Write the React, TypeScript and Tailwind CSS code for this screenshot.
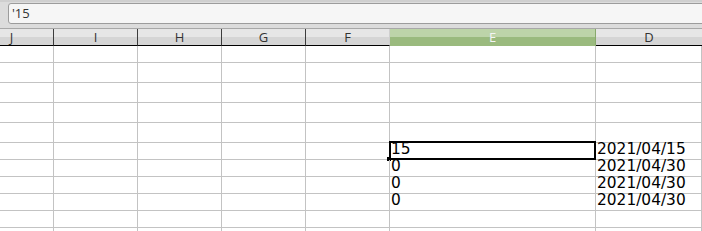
import React from "react";

const cols = [
  { key: "J", w: 84 },
  { key: "I", w: 84 },
  { key: "H", w: 84 },
  { key: "G", w: 84 },
  { key: "F", w: 84 },
  { key: "E", w: 206 },
  { key: "D", w: 106 },
];

const rows: { h: number; e?: string; d?: string; sel?: boolean }[] = [
  { h: 17 },
  { h: 20 },
  { h: 20 },
  { h: 20 },
  { h: 20 },
  { h: 17, e: "15", d: "2021/04/15", sel: true },
  { h: 17, e: "0", d: "2021/04/30" },
  { h: 17, e: "0", d: "2021/04/30" },
  { h: 17, e: "0", d: "2021/04/30" },
  { h: 17 },
  { h: 17 },
];

export default function App() {
  return (
    <div className="w-[702px] h-[231px] overflow-hidden bg-white">
      {/* formula bar */}
      <div className="h-[29px] bg-[#dcdcdc] border-t-[2px] border-[#cfcfcf] pt-[1px] pl-[8px] border-b border-b-[#a8a8a8]">
        <div className="h-[21px] -mr-[6px] rounded-[3px] border border-[#9c9c9c] bg-[#f6f6f6] flex items-center pl-[3px] text-[13px] text-[#333333] [font-family:'Open_Sans',sans-serif]">
          '15
        </div>
      </div>
      <div className="-ml-[30px] w-[760px]">
        {/* header */}
        <div className="flex h-[17px] [font-family:'Open_Sans',sans-serif] text-[13px]">
          {cols.map((c, i) => {
            const sel = c.key === "E";
            const borderR =
              i < 4
                ? "border-r border-r-[#3c3c3c]"
                : sel
                ? "border-r border-r-[#88a96c]"
                : i === 4
                ? "border-r border-r-[#cfcfcf]"
                : "";
            return (
              <div
                key={c.key}
                style={{ width: c.w }}
                className={`shrink-0 flex flex-col relative ${borderR} ${
                  sel ? "border-b border-b-[#9aba7e]" : "border-b border-b-black"
                }`}
              >
                <div className={`h-[8px] ${sel ? "bg-[#bdd4a9]" : "bg-[#e6e6e6]"}`} />
                <div className={`flex-1 ${sel ? "bg-[#9aba7e]" : "bg-[#d5d5d5]"}`} />
                <div
                  className={`absolute inset-0 flex items-center justify-center leading-none ${
                    sel ? "text-[#f4f4f4]" : "text-[#333333]"
                  }`}
                >
                  {c.key}
                </div>
              </div>
            );
          })}
        </div>
        {/* rows */}
        {rows.map((r, ri) => (
          <div key={ri} className="flex" style={{ height: r.h }}>
            {cols.map((c) => {
              const text = c.key === "E" ? r.e : c.key === "D" ? r.d : undefined;
              return (
                <div
                  key={c.key}
                  style={{ width: c.w }}
                  className="shrink-0 relative border-r border-b border-[#c3c3c3] [font-family:'DejaVu_Sans',sans-serif] text-[15.4px] leading-[13px] text-black whitespace-nowrap"
                >
                  {text && <span className="block pl-[1px]">{text}</span>}
                  {c.key === "E" && r.sel && (
                    <>
                      <div className="absolute -left-[1px] -top-[2px] w-[207px] h-[19px] border-2 border-black" />
                      <div className="absolute -left-[3px] top-[14px] w-[4px] h-[4px] bg-black" />
                    </>
                  )}
                </div>
              );
            })}
          </div>
        ))}
      </div>
    </div>
  );
}
